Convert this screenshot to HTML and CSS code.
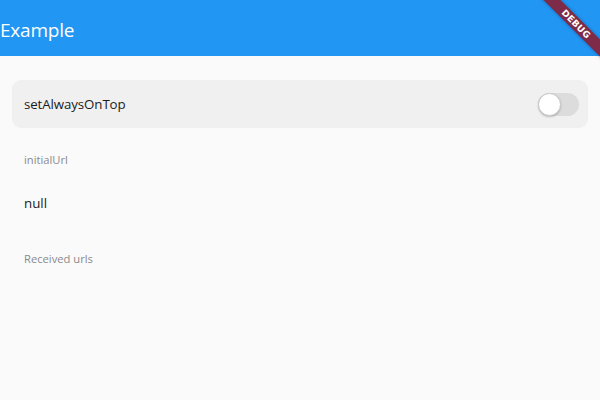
FILE: index.html
```html
<!DOCTYPE html>
<html>
<head>
<meta charset="utf-8">
<link rel="stylesheet" href="styles.css">
</head>
<body>
<div class="app">
  <header class="appbar">
    <h1 class="title">Example</h1>
  </header>
  <main class="content">
    <div class="card">
      <span class="card-label">setAlwaysOnTop</span>
      <span class="switch"><span class="thumb"></span></span>
    </div>
    <div class="section-label first">initialUrl</div>
    <div class="value">null</div>
    <div class="section-label second">Received urls</div>
  </main>
  <div class="banner"><span>DEBUG</span></div>
</div>
</body>
</html>
```
FILE: styles.css
```css
html, body {
  margin: 0;
  padding: 0;
}
body {
  font-family: "Open Sans", "Noto Sans", sans-serif;
  background: #fafafa;
}
.app {
  position: relative;
  width: 600px;
  height: 400px;
  overflow: hidden;
  background: #fafafa;
}
.appbar {
  height: 56px;
  background: #2196f3;
  display: flex;
  align-items: center;
}
.title {
  margin: 0;
  color: #fff;
  font-size: 19px;
  font-weight: 400;
  line-height: 1;
  letter-spacing: -0.2px;
  position: relative;
  top: 2px;
}
.content {
  padding: 24px 12px 0;
}
.card {
  height: 48px;
  background: #f0f0f0;
  border-radius: 9px;
  display: flex;
  align-items: center;
  justify-content: space-between;
  padding: 0 9px 0 12px;
}
.card-label {
  font-size: 13.3px;
  color: #1c1c1c;
  letter-spacing: -0.1px;
}
.switch {
  width: 41px;
  height: 23px;
  border-radius: 12px;
  background: #dcdcdc;
  display: flex;
  align-items: center;
}
.thumb {
  width: 23px;
  height: 23px;
  border-radius: 50%;
  background: #fff;
  box-sizing: border-box;
  border: 1px solid #c8c8c8;
  box-shadow: 0 1px 2px rgba(0,0,0,0.2);
}
.section-label {
  padding-left: 12px;
  font-size: 11.2px;
  color: #8a8a8a;
  line-height: 16px;
}
.section-label.first {
  margin-top: 24px;
}
.section-label.second {
  margin-top: 38px;
}
.value {
  padding-left: 12px;
  font-size: 13.3px;
  color: #1c1c1c;
  margin-top: 25px;
  line-height: 20px;
}
.banner {
  position: absolute;
  left: 516px;
  top: 18px;
  width: 120px;
  height: 12px;
  background: #7d2b48;
  transform: rotate(45deg);
  display: flex;
  align-items: center;
  justify-content: center;
  box-shadow: 0 0 4px rgba(0,0,0,0.3);
}
.banner span {
  color: #fff;
  font-family: "DejaVu Sans", sans-serif;
  font-weight: 900;
  font-size: 9px;
  line-height: 1;
  letter-spacing: 0.3px;
}
```
